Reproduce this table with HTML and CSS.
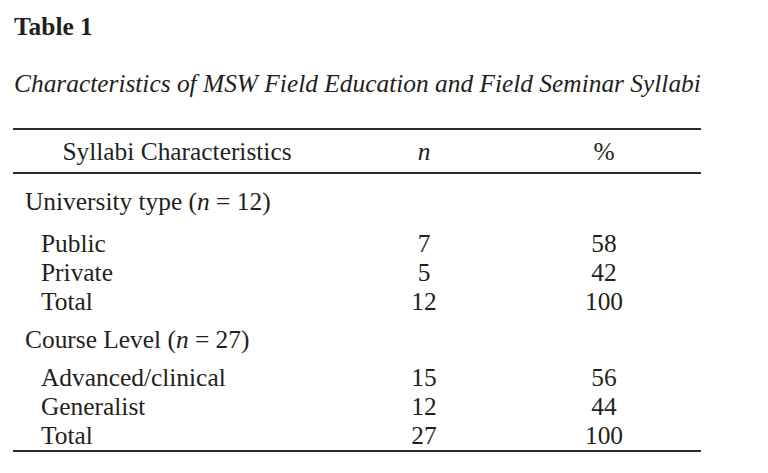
FILE: index.html
```html
<!DOCTYPE html>
<html lang="en">
<head>
<meta charset="utf-8">
<title>Table 1</title>
<link rel="stylesheet" href="styles.css">
</head>
<body>
<div class="page">
  <h1 class="title">Table 1</h1>
  <p class="caption">Characteristics of MSW Field Education and Field Seminar Syllabi</p>
  <table class="data">
    <colgroup>
      <col class="c-label">
      <col class="c-n">
      <col class="c-pct">
    </colgroup>
    <thead>
      <tr class="head-row">
        <th>Syllabi Characteristics</th>
        <th><i>n</i></th>
        <th>%</th>
      </tr>
    </thead>
    <tbody>
      <tr class="group-row first">
        <td colspan="3">University type (<i>n</i> = 12)</td>
      </tr>
      <tr class="item-row">
        <td>Public</td><td>7</td><td>58</td>
      </tr>
      <tr class="item-row">
        <td>Private</td><td>5</td><td>42</td>
      </tr>
      <tr class="item-row">
        <td>Total</td><td>12</td><td>100</td>
      </tr>
      <tr class="group-row">
        <td colspan="3">Course Level (<i>n</i> = 27)</td>
      </tr>
      <tr class="item-row">
        <td>Advanced/clinical</td><td>15</td><td>56</td>
      </tr>
      <tr class="item-row">
        <td>Generalist</td><td>12</td><td>44</td>
      </tr>
      <tr class="item-row last">
        <td>Total</td><td>27</td><td>100</td>
      </tr>
    </tbody>
  </table>
</div>
</body>
</html>
```

FILE: styles.css
```css
* { box-sizing: border-box; }

html, body {
  margin: 0;
  padding: 0;
  background: #ffffff;
}

body {
  font-family: "Liberation Serif", "Times New Roman", serif;
  font-size: 25.4px;
  line-height: 29px;
  color: #231f20;
}

.page {
  padding: 12px 0 0 13px;
}

.title {
  margin: 0 0 0 1px;
  font-size: 25.4px;
  line-height: 29px;
  font-weight: bold;
}

.caption {
  margin: 28px 0 0 1px;
  font-style: italic;
  line-height: 29px;
}

.data {
  margin-top: 30px;
  width: 688px;
  border-collapse: collapse;
  table-layout: fixed;
  border-top: 2px solid #2a2a2a;
  border-bottom: 2px solid #2a2a2a;
}

.c-label { width: 328px; }
.c-n { width: 166px; }
.c-pct { width: 194px; }

.data th,
.data td {
  padding: 0;
  font-weight: normal;
  line-height: 29px;
  white-space: nowrap;
}

.head-row th {
  text-align: center;
  padding-top: 7px;
  padding-bottom: 6px;
  border-bottom: 2px solid #2a2a2a;
}

.group-row td {
  padding: 9px 0 9px 12px;
  text-align: left;
}

.group-row.first td {
  padding-top: 13px;
  padding-bottom: 13px;
}

.item-row td {
  text-align: center;
}

.item-row td:first-child {
  text-align: left;
  padding-left: 28px;
}
```
